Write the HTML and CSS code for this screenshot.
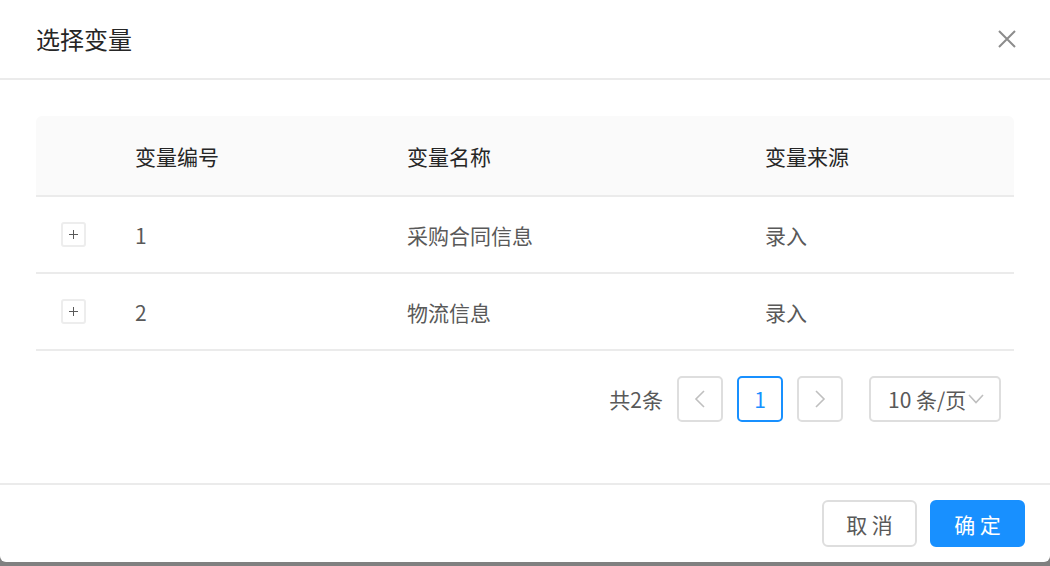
FILE: index.html
```html
<!DOCTYPE html>
<html lang="zh-CN">
<head>
<meta charset="utf-8">
<title>选择变量</title>
<link rel="stylesheet" href="styles.css">
</head>
<body>
<div class="modal">
  <div class="modal-header">
    <div class="modal-title">选择变量</div>
    <button class="modal-close" aria-label="关闭">
      <svg width="18" height="18" viewBox="0 0 18 18"><path d="M1 1 L17 17 M17 1 L1 17" stroke="#8c8c8c" stroke-width="2" fill="none"/></svg>
    </button>
  </div>
  <div class="modal-body">
    <div class="table">
      <div class="row head">
        <div class="cell"></div>
        <div class="cell">变量编号</div>
        <div class="cell">变量名称</div>
        <div class="cell">变量来源</div>
      </div>
      <div class="row">
        <div class="cell expand"><span class="expand-icon"></span></div>
        <div class="cell">1</div>
        <div class="cell">采购合同信息</div>
        <div class="cell">录入</div>
      </div>
      <div class="row">
        <div class="cell expand"><span class="expand-icon"></span></div>
        <div class="cell">2</div>
        <div class="cell">物流信息</div>
        <div class="cell">录入</div>
      </div>
    </div>
    <div class="pagination">
      <span class="total">共2条</span>
      <span class="page-btn disabled">
        <svg width="12" height="18" viewBox="0 0 12 18"><path d="M10 1 L2 9 L10 17" stroke="#bfbfbf" stroke-width="1.6" fill="none"/></svg>
      </span>
      <span class="page-btn active">1</span>
      <span class="page-btn disabled">
        <svg width="12" height="18" viewBox="0 0 12 18"><path d="M2 1 L10 9 L2 17" stroke="#bfbfbf" stroke-width="1.6" fill="none"/></svg>
      </span>
      <span class="size-select">
        <span class="size-text">10 条/页</span>
        <svg width="16" height="10" viewBox="0 0 16 10"><path d="M1 1 L8 8.5 L15 1" stroke="#bfbfbf" stroke-width="1.6" fill="none"/></svg>
      </span>
    </div>
  </div>
  <div class="modal-footer">
    <button class="btn">取 消</button>
    <button class="btn primary">确 定</button>
  </div>
</div>
</body>
</html>
```
FILE: styles.css
```css
html, body {
  margin: 0;
  padding: 0;
}
body {
  background: #808080;
  width: 1050px;
  height: 566px;
  overflow: hidden;
  font-family: "Noto Sans CJK SC", "Noto Sans", sans-serif;
}
.modal {
  width: 1050px;
  height: 562px;
  background: #fff;
  border-radius: 0 0 6px 6px;
  display: flex;
  flex-direction: column;
}
.modal-header {
  height: 78px;
  border-bottom: 2px solid #ebebeb;
  display: flex;
  align-items: center;
  justify-content: space-between;
  padding: 0 34px 0 36px;
}
.modal-title {
  font-size: 24px;
  color: #262626;
  line-height: 32px;
}
.modal-close {
  border: 0;
  background: transparent;
  padding: 0;
  width: 18px;
  height: 18px;
  display: flex;
}
.modal-body {
  padding: 36px 36px 0;
  height: 367px;
}
.table {
  display: flex;
  flex-direction: column;
}
.row {
  display: grid;
  grid-template-columns: 75px 272px 358px 1fr;
  height: 75px;
  border-bottom: 2px solid #ebebeb;
  align-items: center;
  font-size: 21px;
  color: #595959;
}
.row.head {
  height: 79px;
  background: #fafafa;
  border-radius: 6px 6px 0 0;
  color: #262626;
}
.cell {
  padding-left: 24px;
  line-height: 30px;
}
.cell.expand {
  padding-left: 25px;
  display: flex;
}
.expand-icon {
  box-sizing: border-box;
  width: 25px;
  height: 25px;
  border: 2px solid #ededed;
  border-radius: 3px;
  position: relative;
  background: #fff;
}
.expand-icon::before,
.expand-icon::after {
  content: "";
  position: absolute;
  background: #595959;
}
.expand-icon::before {
  left: 6px;
  top: 10px;
  width: 9px;
  height: 1px;
}
.expand-icon::after {
  left: 10px;
  top: 6px;
  width: 1px;
  height: 9px;
}
.pagination {
  display: flex;
  justify-content: flex-end;
  align-items: center;
  margin-top: 25px;
  margin-right: 13px;
  gap: 14px;
  font-size: 21px;
  color: #595959;
}
.page-btn {
  box-sizing: border-box;
  width: 46px;
  height: 46px;
  border: 2px solid #dedede;
  border-radius: 5px;
  display: flex;
  align-items: center;
  justify-content: center;
  color: #595959;
  background: #fff;
}
.page-btn.active {
  border-color: #1890ff;
  color: #1890ff;
}
.size-select {
  margin-left: 12px;
  box-sizing: border-box;
  width: 132px;
  height: 46px;
  border: 2px solid #dedede;
  border-radius: 5px;
  display: flex;
  align-items: center;
  padding-left: 17px;
  gap: 2px;
}
.size-text {
  color: #595959;
}
.modal-footer {
  border-top: 2px solid #ebebeb;
  padding: 15px 25px 0 0;
  display: flex;
  justify-content: flex-end;
  gap: 13px;
}
.btn {
  box-sizing: border-box;
  height: 47px;
  width: 95px;
  font-family: inherit;
  font-size: 21px;
  border-radius: 6px;
  border: 2px solid #dedede;
  background: #fff;
  color: #595959;
  padding: 0;
}
.btn.primary {
  border-color: #1890ff;
  background: #1890ff;
  color: #fff;
}
```
